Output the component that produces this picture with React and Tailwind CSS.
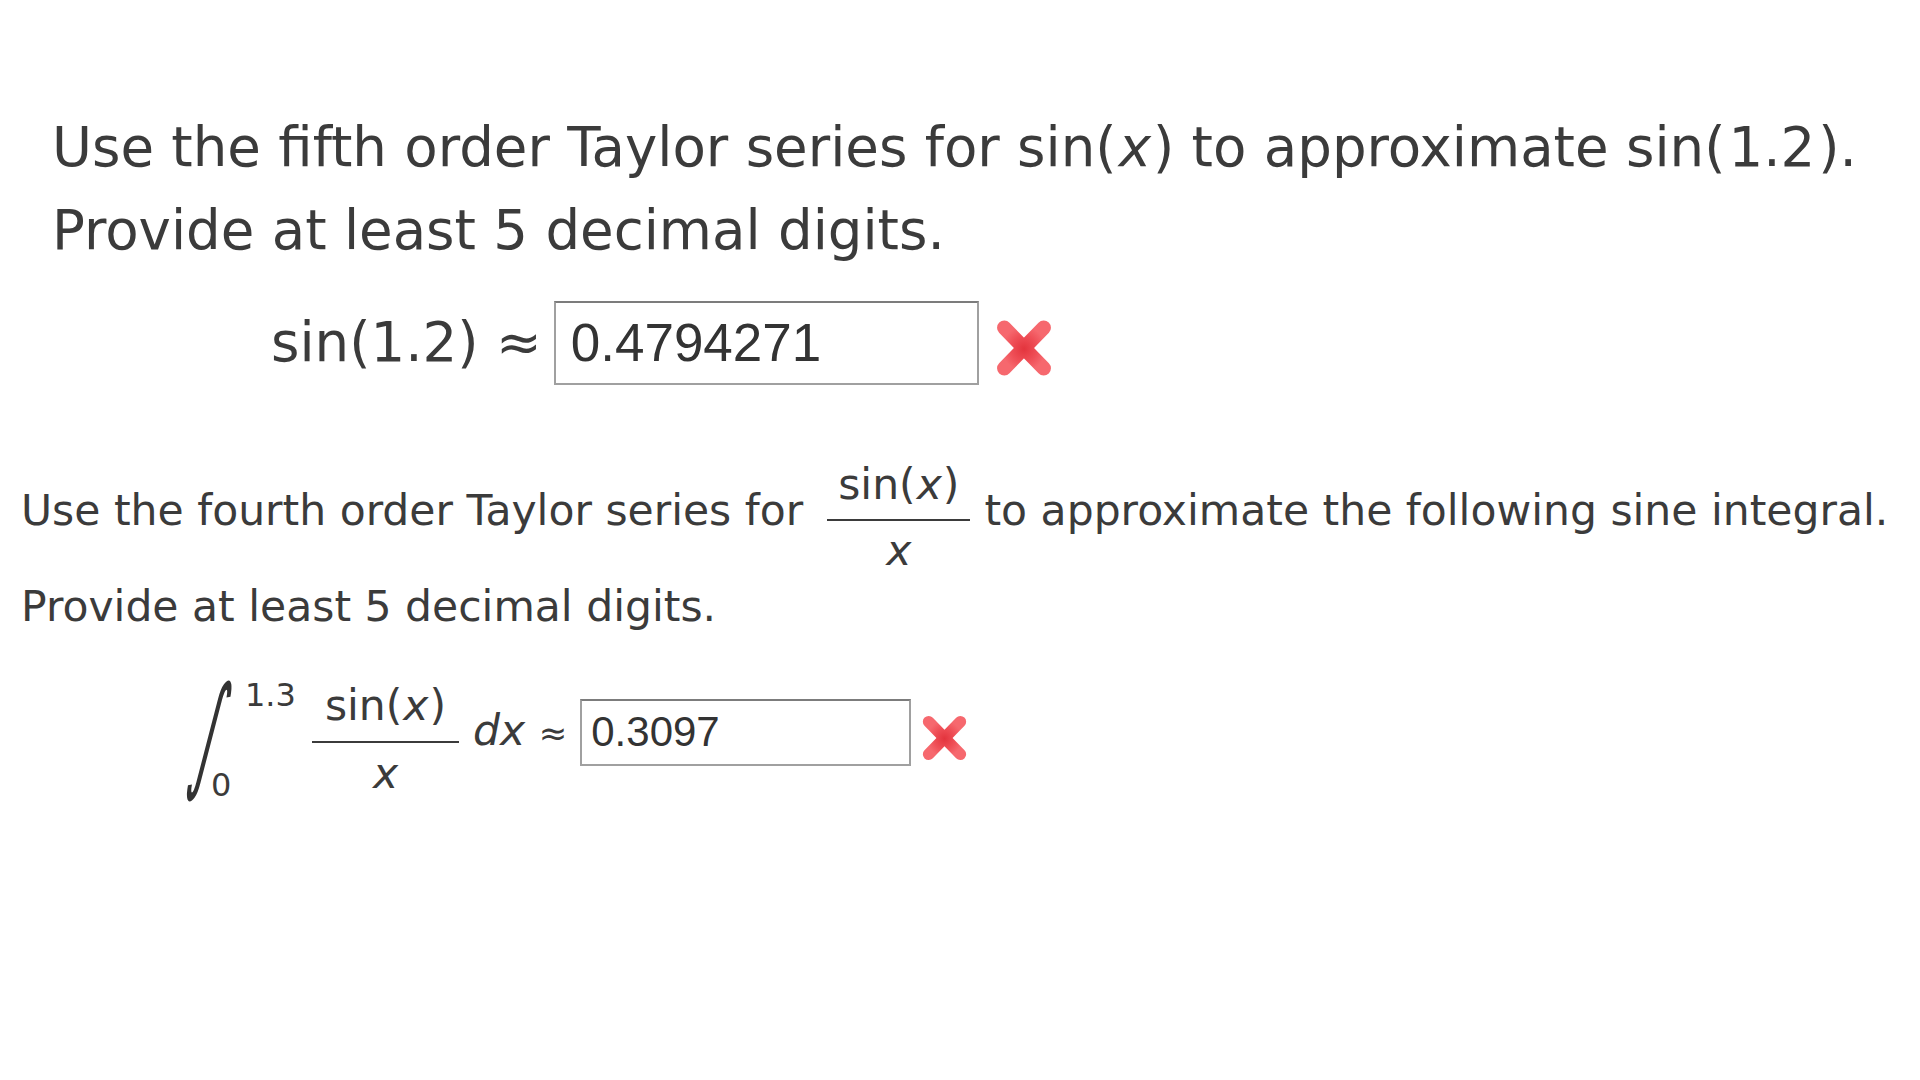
import React from "react";

function XMark({ className, id }) {
  return (
    <svg className={className} viewBox="0 0 54 55" xmlns="http://www.w3.org/2000/svg">
      <defs>
        <radialGradient id={id} cx="50%" cy="52%" r="55%">
          <stop offset="0%" stopColor="#e3343d" />
          <stop offset="60%" stopColor="#ef4f57" />
          <stop offset="100%" stopColor="#f6686e" />
        </radialGradient>
      </defs>
      <g stroke={`url(#${id})`} strokeWidth="14" strokeLinecap="round">
        <line x1="8" y1="8" x2="46" y2="47" />
        <line x1="46" y1="8" x2="8" y2="47" />
      </g>
    </svg>
  );
}

export default function App() {
  return (
    <div className="w-[1920px] h-[1080px] bg-white text-[#3b3b3b] font-['DejaVu_Sans','Verdana',sans-serif] overflow-hidden">
      {/* Section 1 */}
      <div className="pl-[52px] pt-[106px] text-[54.6px] leading-[83px] whitespace-nowrap">
        <p>
          Use the fifth order Taylor series for sin(<i className="mx-[2px]">x</i>) to approximate sin(
          <span className="mx-[3px]">1.2</span>).
        </p>
        <p>Provide at least 5 decimal digits.</p>
        <div className="mt-[29px] ml-[219px] flex items-center h-[83px]">
          <span>sin(1.2) ≈</span>
          <div className="ml-[12px] w-[425px] h-[84px] border-2 border-[#a0a0a0] border-t-[#7c7c7c] flex items-center pl-[15px] font-['Liberation_Sans','Arial',sans-serif] text-[53px] leading-none text-[#333]">
            0.4794271
          </div>
          <XMark id="xg1" className="ml-[17px] w-[56px] h-[58px] mt-[10px]" />
        </div>
      </div>

      {/* Section 2 */}
      <div className="pl-[21px] mt-[62px] text-[42.5px] whitespace-nowrap">
        <div className="flex items-center h-[128px]">
          <span className="leading-[59px]">Use the fourth order Taylor series for</span>
          <span className="flex flex-col items-center pt-[16px] ml-[24px] mr-[14px]">
            <span className="leading-[42px] px-[11px]">
              sin(<i className="mx-[1px]">x</i>)
            </span>
            <span className="mt-[13px] h-[2px] self-stretch bg-[#3b3b3b]" />
            <span className="mt-[9px] leading-[42px]">
              <i>x</i>
            </span>
          </span>
          <span className="leading-[59px]">to approximate the following sine integral.</span>
        </div>
        <p className="mt-[8px] leading-[50px]">Provide at least 5 decimal digits.</p>

        <div className="mt-[38px] ml-[167px] flex items-center h-[124px]">
          <div className="flex h-[124px]">
            <span className="w-[47px] mr-[-24px] flex items-center justify-center text-[52px] leading-none -skew-x-[30deg] scale-y-[2.4] text-[#333]">
              ∫
            </span>
            <div className="flex flex-col justify-between text-[32px] pt-[10px] mb-[-7px]">
              <span className="ml-[34px] leading-[30px]">1.3</span>
              <span className="leading-[32px]">0</span>
            </div>
          </div>
          <span className="flex flex-col items-center ml-[16px] pt-[16px]">
            <span className="leading-[42px] px-[13px]">
              sin(<i className="mx-[1px]">x</i>)
            </span>
            <span className="mt-[14px] h-[2px] self-stretch bg-[#3b3b3b]" />
            <span className="mt-[10px] leading-[42px]">
              <i>x</i>
            </span>
          </span>
          <span className="ml-[14px] leading-[42px]">
            <i>dx</i> <span className="text-[34px]">≈</span>
          </span>
          <div className="ml-[13px] w-[331px] h-[67px] border-2 border-[#a0a0a0] border-t-[#7c7c7c] flex items-center pl-[9px] font-['Liberation_Sans','Arial',sans-serif] text-[42px] leading-none text-[#333]">
            0.3097
          </div>
          <XMark id="xg2" className="ml-[11px] w-[45px] h-[46px] mt-[12px]" />
        </div>
      </div>
    </div>
  );
}
